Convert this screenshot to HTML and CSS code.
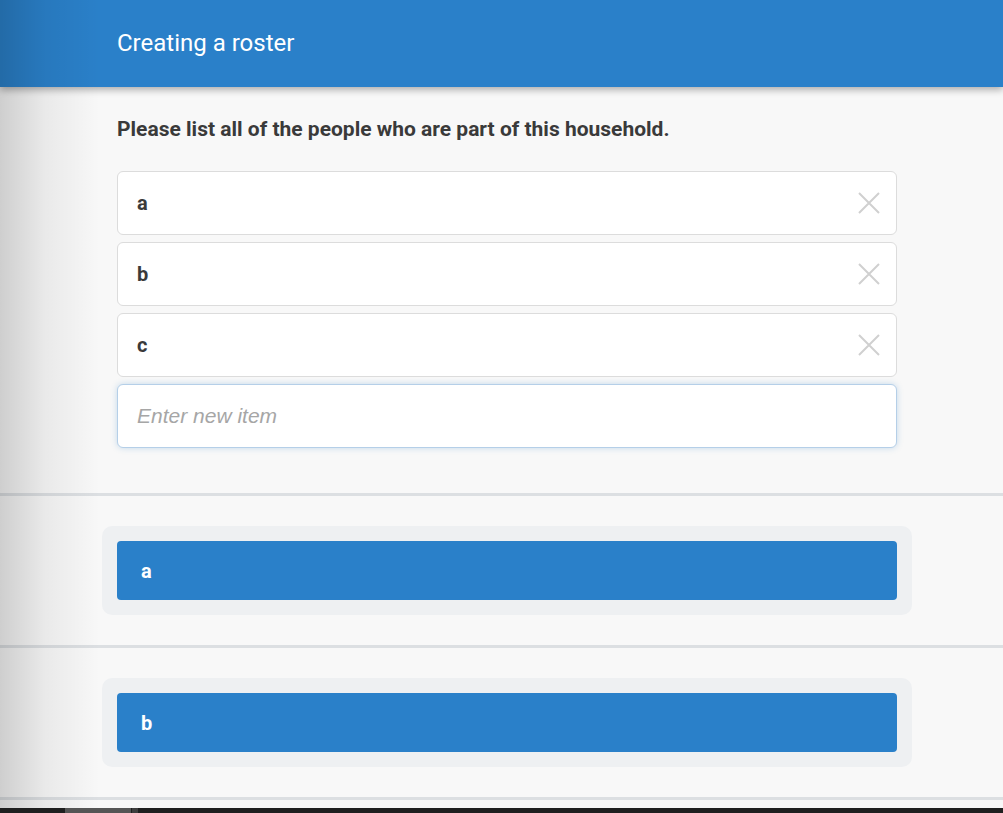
FILE: index.html
```html
<!DOCTYPE html>
<html lang="en">
  <head>
    <meta charset="UTF-8" />
    <meta name="viewport" content="width=device-width, initial-scale=1.0" />
    <title>Creating a roster</title>
    <link rel="stylesheet" href="styles.css">
  </head>
  <body>
    <header class="topbar">
      <h1 class="titulo">Creating a roster</h1>
    </header>

    <div class="section roster">
      <h2 class="question">Please list all of the people who are part of this household.</h2>
      <ul class="item-list">
        <li class="item">
          <span>a</span>
          <svg class="remove" width="22" height="22" viewBox="0 0 22 22"><path d="M1 1L21 21M21 1L1 21" /></svg>
        </li>
        <li class="item">
          <span>b</span>
          <svg class="remove" width="22" height="22" viewBox="0 0 22 22"><path d="M1 1L21 21M21 1L1 21" /></svg>
        </li>
        <li class="item">
          <span>c</span>
          <svg class="remove" width="22" height="22" viewBox="0 0 22 22"><path d="M1 1L21 21M21 1L1 21" /></svg>
        </li>
      </ul>
      <input class="new-item" type="text" placeholder="Enter new item" />
    </div>

    <div class="section">
      <div class="card">
        <button class="person">a</button>
      </div>
    </div>

    <div class="section">
      <div class="card">
        <button class="person">b</button>
      </div>
    </div>

    <div class="taskbar">
      <div class="task"></div>
      <div class="task small"></div>
    </div>

    <div class="edge-shadow"></div>
  </body>
</html>
```

FILE: styles.css
```css
body {
  font-family: Roboto, "Liberation Sans", sans-serif;
  margin: 0;
  padding: 0;
  background-color: #f8f8f8;
  color: #333;
  height: 813px;
  overflow: hidden;
  position: relative;
}

.topbar {
  background-color: #2a80c9;
  color: white;
  height: 87px;
  padding-left: 117px;
  display: flex;
  align-items: center;
  box-shadow: 0 3px 7px rgba(0, 0, 0, 0.3);
  position: relative;
}

.titulo {
  margin: 0;
  font-size: 24px;
  font-weight: 400;
  padding-bottom: 2px;
}

.section {
  padding: 30px 0 30px 102px;
  border-bottom: 3px solid #dcdfe2;
}

.roster {
  padding: 30px 0 45px 117px;
}

.question {
  margin: 0 0 29px;
  font-size: 21px;
  line-height: 25px;
  font-weight: 700;
  color: #3a3a3a;
}

.item-list {
  list-style: none;
  margin: 0;
  padding: 0;
}

.item {
  width: 780px;
  height: 64px;
  box-sizing: border-box;
  background-color: white;
  border: 1px solid #dcdcdc;
  border-radius: 6px;
  margin-bottom: 7px;
  padding: 0 16px 0 19px;
  display: flex;
  justify-content: space-between;
  align-items: center;
  font-size: 20px;
  font-weight: 700;
  color: #3a3a3a;
}

.remove {
  stroke: #d0d0d0;
  stroke-width: 2;
  fill: none;
}

.new-item {
  display: block;
  width: 780px;
  height: 64px;
  box-sizing: border-box;
  border: 1px solid #b5cfe8;
  border-radius: 6px;
  padding: 0 19px;
  background-color: white;
  box-shadow: 0 0 6px rgba(42, 128, 201, 0.25);
  font-family: "Liberation Sans", Arial, sans-serif;
  font-size: 21px;
  outline: none;
}

.new-item::placeholder {
  color: #a6a6a6;
  font-style: italic;
}

.card {
  width: 780px;
  padding: 15px;
  background-color: #eef0f2;
  border-radius: 10px;
}

.person {
  display: block;
  width: 100%;
  height: 59px;
  border: none;
  border-radius: 4px;
  background-color: #2a80c9;
  color: white;
  text-align: left;
  padding: 0 24px;
  font-family: Roboto, "Liberation Sans", sans-serif;
  font-size: 20px;
  font-weight: 700;
}

.taskbar {
  position: absolute;
  left: 0;
  right: 0;
  bottom: 0;
  height: 5px;
  background-color: #1f1f1f;
  display: flex;
}

.task {
  margin-left: 65px;
  width: 66px;
  background-color: #555;
}

.task.small {
  margin-left: 1px;
  width: 6px;
  background-color: #3e3e3e;
}

.edge-shadow {
  position: absolute;
  top: 0;
  left: 0;
  bottom: 5px;
  width: 100px;
  background: linear-gradient(to right, rgba(0, 0, 0, 0.17), rgba(0, 0, 0, 0.06) 45px, rgba(0, 0, 0, 0) 100px);
  pointer-events: none;
}
```
